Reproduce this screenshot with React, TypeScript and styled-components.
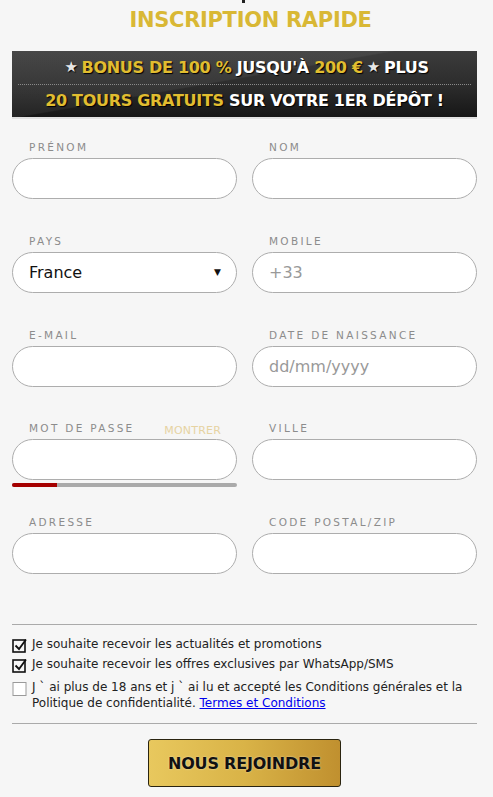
import React from "react";
import styled, { createGlobalStyle } from "styled-components";

const GlobalStyle = createGlobalStyle`
  body {
    margin: 0;
    background: #f6f6f6;
    font-family: "DejaVu Sans", "Liberation Sans", sans-serif;
  }
`;

const Page = styled.div`
  width: 493px;
  padding: 0 16px 0 12px;
  box-sizing: border-box;
  position: relative;
`;

const TopMark = styled.div`
  position: absolute;
  left: 242px;
  top: 0;
  width: 3px;
  height: 3px;
  background: #222;
`;

const Title = styled.h1`
  margin: 0;
  padding: 7px 0 0 12px;
  text-align: center;
  color: #d9b835;
  font-size: 21px;
  font-weight: bold;
  line-height: 27px;
  letter-spacing: -0.3px;
`;

const Banner = styled.div`
  margin-top: 17px;
  height: 66px;
  background:
    linear-gradient(170deg, rgba(255, 255, 255, 0.06) 0 45%, rgba(0, 0, 0, 0) 46%),
    linear-gradient(180deg, #3c3c3c 0%, #2b2b2b 55%, #161616 100%);
  box-shadow: 0 2px 0 #e2e2e2;
  display: flex;
  flex-direction: column;
  padding: 0 6px;
`;

const BannerLine = styled.div<{ $first?: boolean }>`
  flex: 1;
  display: flex;
  align-items: center;
  justify-content: center;
  color: #fff;
  font-weight: bold;
  font-size: 16px;
  letter-spacing: -0.3px;
  text-shadow: 1px 1px 1px #000;
  white-space: nowrap;
  border-bottom: ${(p) => (p.$first ? "1px dotted #8a8a8a" : "none")};
`;

const Gold = styled.span`
  color: #e1bd30;
`;

const Star = styled.span`
  color: #e6e6e6;
  font-size: 15px;
  margin: 0 4px;
`;

const FormGrid = styled.div`
  margin-top: 23px;
  display: grid;
  grid-template-columns: 225px 225px;
  column-gap: 15px;
  row-gap: 34.75px;
`;

const Field = styled.div`
  display: flex;
  flex-direction: column;
`;

const LabelRow = styled.div`
  display: flex;
  align-items: center;
  justify-content: space-between;
  height: 14px;
  margin-bottom: 4px;
  padding: 0 16px 0 17px;
`;

const Label = styled.span`
  font-size: 10.5px;
  letter-spacing: 2.3px;
  color: #8c8c8c;
`;

const Show = styled.span`
  font-size: 11px;
  letter-spacing: 0.2px;
  color: #e6d3a2;
  margin-top: 4px;
`;

const InputBox = styled.div`
  height: 41px;
  box-sizing: border-box;
  border: 1px solid #adadad;
  border-radius: 21px;
  background: #fff;
  display: flex;
  align-items: center;
  justify-content: space-between;
  padding: 0 15px 0 16px;
`;

const Value = styled.span<{ $muted?: boolean }>`
  font-size: 16px;
  color: ${(p) => (p.$muted ? "#999" : "#111")};
`;

const Caret = styled.span`
  font-size: 9px;
  color: #111;
`;

const Strength = styled.div`
  margin-top: 3px;
  margin-bottom: -7px;
  height: 4px;
  border-radius: 2px;
  background: #aaa;
  overflow: hidden;
`;

const StrengthFill = styled.div`
  height: 100%;
  background: #a50000;
`;

const Rule = styled.hr`
  margin: 0;
  border: 0;
  border-top: 1px solid #aaa;
`;

const FirstRule = styled(Rule)`
  margin-top: 50px;
`;

const Checks = styled.div`
  padding: 11px 0 12px;
  display: flex;
  flex-direction: column;
  gap: 3px;
`;

const CheckRow = styled.div<{ $spaced?: boolean }>`
  display: flex;
  align-items: flex-start;
  gap: 5px;
  margin-top: ${(p) => (p.$spaced ? "3px" : "0")};
  font-size: 12px;
  line-height: 16px;
  color: #222;
`;

const Box = styled.span`
  flex: none;
  width: 15px;
  height: 16px;
  display: block;
  margin-top: 1px;
`;

const Terms = styled.a`
  color: #0000ee;
  text-decoration: underline;
`;

const ButtonRow = styled.div`
  display: flex;
  justify-content: center;
  padding-top: 15px;
`;

const JoinButton = styled.button`
  width: 193px;
  height: 48px;
  border: 1px solid #2a2410;
  border-radius: 3px;
  background: linear-gradient(90deg, #e8c85e 0%, #d9b347 50%, #c0902f 100%);
  font-family: "DejaVu Sans", "Liberation Sans", sans-serif;
  font-weight: bold;
  font-size: 16px;
  letter-spacing: -0.2px;
  color: #111;
  text-shadow: 0 0 2px rgba(255, 255, 255, 0.6);
`;

const CheckBox = ({ checked }: { checked: boolean }) => (
  <Box>
    <svg width="15" height="16" viewBox="0 0 15 16">
      {checked ? (
        <>
          <rect x="1" y="3" width="12" height="12" fill="none" stroke="#111" strokeWidth="1.6" />
          <path d="M3.5 8.5 L7 12 L14 2.5" fill="none" stroke="#111" strokeWidth="1.8" />
        </>
      ) : (
        <rect x="1" y="2.5" width="13" height="13" fill="#fff" stroke="#9a9a9a" strokeWidth="1" />
      )}
    </svg>
  </Box>
);

type FieldDef = {
  label: string;
  value?: string;
  muted?: boolean;
  select?: boolean;
  password?: boolean;
};

const fields: FieldDef[] = [
  { label: "PRÉNOM" },
  { label: "NOM" },
  { label: "PAYS", value: "France", select: true },
  { label: "MOBILE", value: "+33", muted: true },
  { label: "E-MAIL" },
  { label: "DATE DE NAISSANCE", value: "dd/mm/yyyy", muted: true },
  { label: "MOT DE PASSE", password: true },
  { label: "VILLE" },
  { label: "ADRESSE" },
  { label: "CODE POSTAL/ZIP" },
];

export default function App() {
  return (
    <>
      <GlobalStyle />
      <Page>
        <TopMark />
        <Title>INSCRIPTION RAPIDE</Title>
        <Banner>
          <BannerLine $first>
            <Star>★</Star>
            <Gold>BONUS DE 100 %</Gold>&nbsp;JUSQU'À&nbsp;<Gold>200 €</Gold>
            <Star>★</Star>PLUS
          </BannerLine>
          <BannerLine>
            <Gold>20 TOURS GRATUITS</Gold>&nbsp;SUR VOTRE 1ER DÉPÔT !
          </BannerLine>
        </Banner>

        <FormGrid>
          {fields.map((f) => (
            <Field key={f.label}>
              <LabelRow>
                <Label>{f.label}</Label>
                {f.password && <Show>MONTRER</Show>}
              </LabelRow>
              <InputBox>
                <Value $muted={f.muted}>{f.value}</Value>
                {f.select && <Caret>▼</Caret>}
              </InputBox>
              {f.password && (
                <Strength>
                  <StrengthFill style={{ width: "20%" }} />
                </Strength>
              )}
            </Field>
          ))}
        </FormGrid>

        <FirstRule />
        <Checks>
          <CheckRow>
            <CheckBox checked />
            <span>Je souhaite recevoir les actualités et promotions</span>
          </CheckRow>
          <CheckRow>
            <CheckBox checked />
            <span>Je souhaite recevoir les offres exclusives par WhatsApp/SMS</span>
          </CheckRow>
          <CheckRow $spaced>
            <CheckBox checked={false} />
            <span>
              J ` ai plus de 18 ans et j ` ai lu et accepté les Conditions générales et la
              Politique de confidentialité. <Terms href="#">Termes et Conditions</Terms>
            </span>
          </CheckRow>
        </Checks>
        <Rule />
        <ButtonRow>
          <JoinButton>NOUS REJOINDRE</JoinButton>
        </ButtonRow>
      </Page>
    </>
  );
}
